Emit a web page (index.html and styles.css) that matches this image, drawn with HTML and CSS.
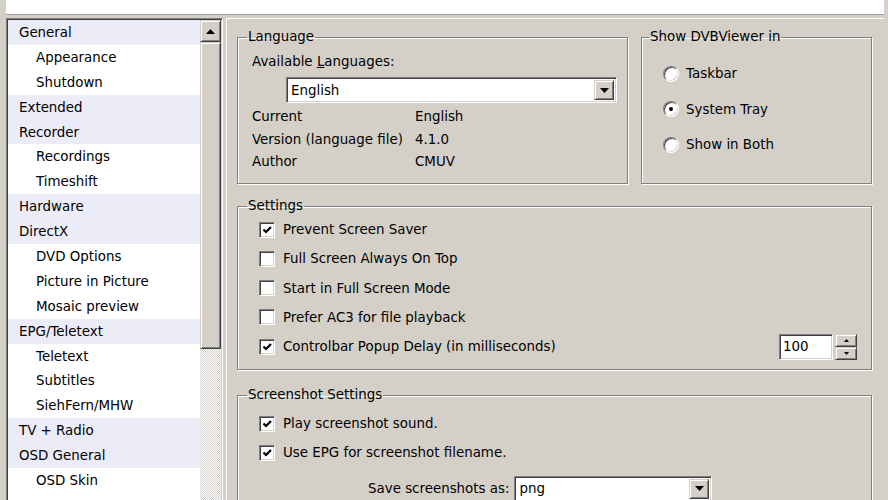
FILE: index.html
```html
<!DOCTYPE html>
<html>
<head>
<meta charset="utf-8">
<link rel="stylesheet" href="styles.css">
</head>
<body>
<div class="topbar"></div>
<div class="main">
  <div class="listbox">
    <ul class="items">
      <li class="top">General</li>
      <li class="sub">Appearance</li>
      <li class="sub">Shutdown</li>
      <li class="top">Extended</li>
      <li class="top">Recorder</li>
      <li class="sub">Recordings</li>
      <li class="sub">Timeshift</li>
      <li class="top">Hardware</li>
      <li class="top">DirectX</li>
      <li class="sub">DVD Options</li>
      <li class="sub">Picture in Picture</li>
      <li class="sub">Mosaic preview</li>
      <li class="top">EPG/Teletext</li>
      <li class="sub">Teletext</li>
      <li class="sub">Subtitles</li>
      <li class="sub">SiehFern/MHW</li>
      <li class="top">TV + Radio</li>
      <li class="top">OSD General</li>
      <li class="sub">OSD Skin</li>
    </ul>
    <div class="vscroll">
      <div class="sbtn"><svg width="9" height="5" viewBox="0 0 9 5"><path d="M0 5 L4.5 0 L9 5 Z" fill="#000"/></svg></div>
      <div class="thumb"></div>
      <div class="track"></div>
    </div>
  </div>
  <div class="panel">
    <div class="row1">
      <fieldset class="grp lang">
        <legend>Language</legend>
        <div class="label">Available <u>L</u>anguages:</div>
        <div class="combo langcombo">
          <span class="ctext">English</span>
          <span class="dbtn"><svg width="9" height="5" viewBox="0 0 9 5"><path d="M0 0 L9 0 L4.5 5 Z" fill="#000"/></svg></span>
        </div>
        <div class="info">
          <span>Current</span><span>English</span>
          <span>Version (language file)</span><span>4.1.0</span>
          <span>Author</span><span>CMUV</span>
        </div>
      </fieldset>
      <fieldset class="grp show">
        <legend>Show DVBViewer in</legend>
        <div class="radio"><span class="rb"></span>Taskbar</div>
        <div class="radio"><span class="rb on"></span>System Tray</div>
        <div class="radio"><span class="rb"></span>Show in Both</div>
      </fieldset>
    </div>
    <fieldset class="grp settings">
      <legend>Settings</legend>
      <div class="check"><span class="cb on"><svg width="12" height="12" viewBox="0 0 12 12"><path d="M2.5 5.5 L5 8 L10 3" stroke="#000" stroke-width="2.2" fill="none"/></svg></span>Prevent Screen Saver</div>
      <div class="check"><span class="cb"></span>Full Screen Always On Top</div>
      <div class="check"><span class="cb"></span>Start in Full Screen Mode</div>
      <div class="check"><span class="cb"></span>Prefer AC3 for file playback</div>
      <div class="check last"><span class="cb on"><svg width="12" height="12" viewBox="0 0 12 12"><path d="M2.5 5.5 L5 8 L10 3" stroke="#000" stroke-width="2.2" fill="none"/></svg></span>Controlbar Popup Delay (in milliseconds)
        <span class="spin">
          <span class="spinedit">100</span>
          <span class="spinbtns">
            <span class="spb"><svg width="5" height="3" viewBox="0 0 5 3"><path d="M0 3 L2.5 0 L5 3 Z" fill="#000"/></svg></span>
            <span class="spb"><svg width="5" height="3" viewBox="0 0 5 3"><path d="M0 0 L5 0 L2.5 3 Z" fill="#000"/></svg></span>
          </span>
        </span>
      </div>
    </fieldset>
    <fieldset class="grp shots">
      <legend>Screenshot Settings</legend>
      <div class="check"><span class="cb on"><svg width="12" height="12" viewBox="0 0 12 12"><path d="M2.5 5.5 L5 8 L10 3" stroke="#000" stroke-width="2.2" fill="none"/></svg></span>Play screenshot sound.</div>
      <div class="check"><span class="cb on"><svg width="12" height="12" viewBox="0 0 12 12"><path d="M2.5 5.5 L5 8 L10 3" stroke="#000" stroke-width="2.2" fill="none"/></svg></span>Use EPG for screenshot filename.</div>
      <div class="saverow">
        <span class="savelabel">Save screenshots as:</span>
        <div class="combo savecombo">
          <span class="ctext">png</span>
          <span class="dbtn"><svg width="9" height="5" viewBox="0 0 9 5"><path d="M0 0 L9 0 L4.5 5 Z" fill="#000"/></svg></span>
        </div>
      </div>
    </fieldset>
  </div>
</div>
</body>
</html>
```
FILE: styles.css
```css
html, body {
  margin: 0;
  padding: 0;
  height: 500px;
  overflow: hidden;
}
body {
  background: #d4d0c8;
  font-family: "DejaVu Sans", sans-serif;
  font-size: 13.4px;
  color: #000;
}
.topbar {
  height: 14px;
  margin: 0 4px 0 6px;
  background: #fff;
  border-bottom: 1px solid #a0a0a0;
}
.main {
  display: flex;
  margin-top: 3px;
  height: 482px;
}
.listbox {
  margin-left: 6px;
  width: 217px;
  height: 500px;
  box-sizing: border-box;
  border: 1px solid;
  border-color: #808080 #fff #fff #808080;
  box-shadow: inset 1px 1px 0 #404040, inset -1px -1px 0 #d4d0c8;
  padding: 1px;
  display: flex;
  background: #fff;
}
.items {
  list-style: none;
  margin: 0;
  padding: 0;
  width: 192px;
  overflow: hidden;
}
.items li {
  height: 24.9px;
  line-height: 25.5px;
  white-space: nowrap;
}
.items li.top {
  background: #ececf8;
  padding-left: 11px;
}
.items li.sub {
  background: #fff;
  padding-left: 28px;
}
.vscroll {
  width: 21px;
  display: flex;
  flex-direction: column;
}
.sbtn, .thumb {
  background: #d4d0c8;
  box-sizing: border-box;
  border: 1px solid;
  border-color: #d4d0c8 #404040 #404040 #d4d0c8;
  box-shadow: inset 1px 1px 0 #fff, inset -1px -1px 0 #808080;
}
.sbtn {
  height: 22px;
  display: flex;
  align-items: center;
  justify-content: center;
}
.thumb {
  height: 307px;
}
.track {
  flex: 1;
  background: repeating-conic-gradient(#d4d0c8 0 25%, #fff 0 50%) 0 0 / 2px 2px;
}
.panel {
  margin-left: 3px;
  width: 658px;
  height: 490px;
  box-sizing: border-box;
  border-left: 1px solid #fff;
  border-top: 1px solid #fff;
  padding: 10px 11px 0 10px;
}
.row1 {
  display: flex;
  gap: 13px;
}
.grp {
  margin: 0;
  box-sizing: border-box;
  border: 1px solid #808080;
  box-shadow: inset 1px 1px 0 #fff, 1px 1px 0 #fff;
  padding: 0 10px 0 14px;
  min-width: 0;
}
.grp legend {
  padding: 0 1px;
  margin-left: -5px;
  line-height: 16px;
}
.lang {
  width: 391px;
  height: 155px;
  padding-top: 9px;
}
.label {
  line-height: 16px;
}
.combo {
  height: 26px;
  box-sizing: border-box;
  background: #fff;
  border: 1px solid;
  border-color: #808080 #fff #fff #808080;
  box-shadow: inset 1px 1px 0 #404040, inset -1px -1px 0 #d4d0c8;
  display: flex;
  align-items: center;
  padding: 2px;
}
.langcombo {
  margin-top: 7px;
  margin-left: 34px;
  width: 331px;
}
.ctext {
  flex: 1;
  padding-left: 2px;
}
.dbtn {
  width: 20px;
  height: 20px;
  box-sizing: border-box;
  background: #d4d0c8;
  border: 1px solid;
  border-color: #d4d0c8 #404040 #404040 #d4d0c8;
  box-shadow: inset 1px 1px 0 #fff, inset -1px -1px 0 #808080;
  display: flex;
  align-items: center;
  justify-content: center;
}
.info {
  margin-top: 3px;
  display: grid;
  grid-template-columns: 163px auto;
  line-height: 22.5px;
}
.show {
  width: 231px;
  height: 155px;
  padding-top: 11px;
  padding-left: 21px;
}
.settings legend,
.shots legend {
  margin-left: -12px;
}
.show legend {
  margin-left: -14px;
}
.radio {
  height: 35.5px;
  display: flex;
  align-items: center;
  gap: 7px;
}
.rb {
  width: 16px;
  height: 16px;
  box-sizing: border-box;
  border-radius: 50%;
  background: #fff;
  border: 1px solid;
  border-color: #808080 #fff #fff #808080;
  box-shadow: inset 1px 1px 0 #404040, inset -1px -1px 0 #d4d0c8;
  display: flex;
  align-items: center;
  justify-content: center;
}
.rb.on::after {
  content: "";
  width: 4px;
  height: 4px;
  border-radius: 50%;
  background: #000;
}
.settings {
  width: 635px;
  height: 172px;
  margin-top: 14px;
  padding-top: 1px;
  padding-left: 21px;
  padding-right: 14px;
}
.check {
  height: 29.25px;
  display: flex;
  align-items: center;
  gap: 8px;
  white-space: nowrap;
}
.cb {
  width: 16px;
  height: 16px;
  flex: none;
  box-sizing: border-box;
  background: #fff;
  border: 1px solid;
  border-color: #808080 #fff #fff #808080;
  box-shadow: inset 1px 1px 0 #404040, inset -1px -1px 0 #d4d0c8;
  display: flex;
  align-items: center;
  justify-content: center;
}
.spin {
  margin-left: auto;
  display: flex;
  align-items: center;
  gap: 2px;
}
.spinedit {
  width: 54px;
  height: 26px;
  box-sizing: border-box;
  background: #fff;
  border: 1px solid;
  border-color: #808080 #fff #fff #808080;
  box-shadow: inset 1px 1px 0 #404040, inset -1px -1px 0 #d4d0c8;
  line-height: 24px;
  padding-left: 3px;
}
.spinbtns {
  display: flex;
  flex-direction: column;
}
.spb {
  width: 22px;
  height: 13px;
  box-sizing: border-box;
  background: #d4d0c8;
  border: 1px solid;
  border-color: #d4d0c8 #404040 #404040 #d4d0c8;
  box-shadow: inset 1px 1px 0 #fff, inset -1px -1px 0 #808080;
  display: flex;
  align-items: center;
  justify-content: center;
}
.shots {
  width: 635px;
  height: 140px;
  margin-top: 17px;
  padding-top: 6px;
  padding-left: 21px;
}
.saverow {
  margin-top: 8px;
  display: flex;
  align-items: center;
  gap: 5px;
  padding-left: 109px;
}
.savecombo {
  width: 198px;
}
```
